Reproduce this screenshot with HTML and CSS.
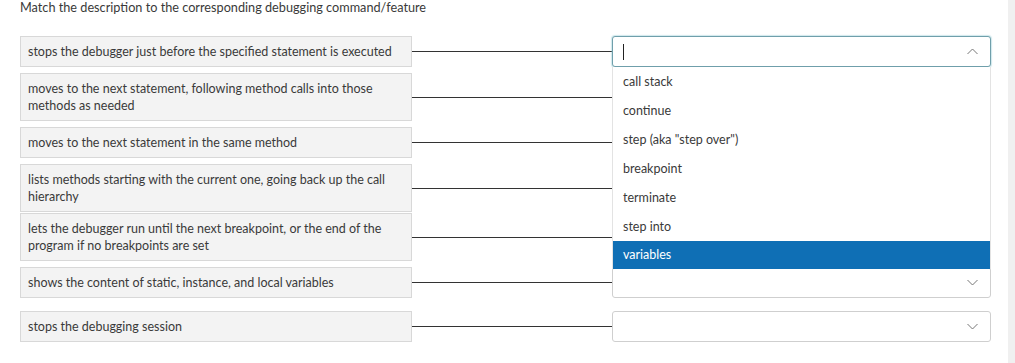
FILE: index.html
```html
<!DOCTYPE html>
<html lang="en">
<head>
<meta charset="utf-8">
<title>Match</title>
<link rel="stylesheet" href="styles.css">
</head>
<body>
<div class="page">
  <main class="content">
    <p class="prompt">Match the description to the corresponding debugging command/feature</p>
    <div class="rows">
      <div class="row">
        <div class="desc">stops the debugger just before the specified statement is executed</div>
        <div class="link"></div>
        <div class="select select--open">
          <span class="caret"></span>
          <svg class="chev" width="11" height="7" viewBox="0 0 11 7"><path d="M0.5 6 L5.5 1 L10.5 6" fill="none" stroke="#777" stroke-width="1"/></svg>
          <ul class="listbox">
            <li class="opt">call stack</li>
            <li class="opt">continue</li>
            <li class="opt">step (aka "step over")</li>
            <li class="opt">breakpoint</li>
            <li class="opt">terminate</li>
            <li class="opt">step into</li>
            <li class="opt opt--active">variables</li>
          </ul>
        </div>
      </div>
      <div class="row">
        <div class="desc">moves to the next statement, following method calls into those methods as needed</div>
        <div class="link"></div>
        <div class="select"></div>
      </div>
      <div class="row">
        <div class="desc">moves to the next statement in the same method</div>
        <div class="link"></div>
        <div class="select"></div>
      </div>
      <div class="row">
        <div class="desc">lists methods starting with the current one, going back up the call hierarchy</div>
        <div class="link"></div>
        <div class="select"></div>
      </div>
      <div class="row row--tight">
        <div class="desc">lets the debugger run until the next breakpoint, or the end of the program if no breakpoints are set</div>
        <div class="link"></div>
        <div class="select"></div>
      </div>
      <div class="row">
        <div class="desc">shows the content of static, instance, and local variables</div>
        <div class="link"></div>
        <div class="select">
          <svg class="chev" width="11" height="7" viewBox="0 0 11 7"><path d="M0.5 1 L5.5 6 L10.5 1" fill="none" stroke="#777" stroke-width="1"/></svg>
        </div>
      </div>
      <div class="row row--loose">
        <div class="desc">stops the debugging session</div>
        <div class="link"></div>
        <div class="select">
          <svg class="chev" width="11" height="7" viewBox="0 0 11 7"><path d="M0.5 1 L5.5 6 L10.5 1" fill="none" stroke="#777" stroke-width="1"/></svg>
        </div>
      </div>
    </div>
  </main>
  <div class="edge"></div>
</div>
</body>
</html>
```
FILE: styles.css
```css
* { box-sizing: border-box; }
html, body { margin: 0; padding: 0; background: #fff; }
body {
  font-family: Lato, "Open Sans", Arial, sans-serif;
  font-size: 12.5px;
  color: #3a3a3a;
}
.page {
  display: flex;
  height: 363px;
  overflow: hidden;
}
.content {
  flex: 1;
  padding-left: 20px;
}
.edge {
  width: 7px;
  background: #f0f0f0;
}
.prompt {
  margin: 0;
  font-size: 12.7px;
  line-height: 15px;
  height: 36px;
  color: #3a3a3a;
}
.rows {
  display: flex;
  flex-direction: column;
  gap: 6px;
}
.row {
  display: flex;
  align-items: center;
}
.row--tight { margin-top: -5px; }
.row--loose { margin-top: 7px; }
.desc {
  width: 392px;
  flex: none;
  background: #f3f3f3;
  border: 1px solid #d8d8d8;
  padding: 6px 7px;
  line-height: 17px;
}
.link {
  width: 200px;
  flex: none;
  height: 1px;
  background: #333;
}
.select {
  position: relative;
  width: 379px;
  flex: none;
  height: 31px;
  border: 1px solid #cfcfcf;
  border-radius: 3px;
  background: #fff;
  display: flex;
  align-items: center;
  justify-content: flex-end;
  padding-right: 12px;
}
.select--open {
  border-color: #6f9fab;
  box-shadow: 0 0 1px 1px rgba(120, 190, 200, 0.35);
}
.caret {
  position: absolute;
  left: 10px;
  top: 7px;
  width: 1px;
  height: 16px;
  background: #222;
}
.listbox {
  position: absolute;
  z-index: 5;
  top: 30px;
  left: -1px;
  right: -1px;
  margin: 0;
  padding: 0;
  list-style: none;
  background: #fff;
  border-left: 1px solid #e3e3e3;
  border-right: 1px solid #e3e3e3;
}
.opt {
  height: 29px;
  line-height: 29px;
  padding-left: 10px;
}
.opt--active {
  background: #0f6fb5;
  color: #fff;
  height: 28px;
  line-height: 28px;
}
```
